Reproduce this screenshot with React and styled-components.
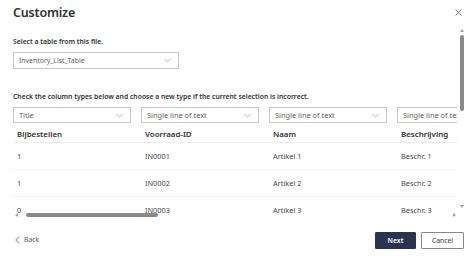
import styled, { createGlobalStyle } from "styled-components";

const GlobalStyle = createGlobalStyle`
  html, body {
    margin: 0;
    padding: 0;
    background: #ffffff;
  }
  * {
    box-sizing: border-box;
  }
  body {
    font-family: "Noto Sans", "Open Sans", sans-serif;
    color: #323130;
  }
`;

const columns = [
  { type: "Title", name: "Bijbestellen" },
  { type: "Single line of text", name: "Voorraad-ID" },
  { type: "Single line of text", name: "Naam" },
  { type: "Single line of text", name: "Beschrijving" },
];

const rows = [
  ["1", "IN0001", "Artikel 1", "Beschr. 1"],
  ["1", "IN0002", "Artikel 2", "Beschr. 2"],
  ["0", "IN0003", "Artikel 3", "Beschr. 3"],
];

const Chevron = () => (
  <svg width="7" height="5" viewBox="0 0 7 5">
    <path d="M0.5 1 L3.5 4 L6.5 1" fill="none" stroke="#a19f9d" strokeWidth="0.8" />
  </svg>
);

const App = () => {
  return (
    <>
      <GlobalStyle />
      <Dialog>
        <Header>
          <Title>Customize</Title>
          <Close aria-label="Close">
            <svg width="7" height="7" viewBox="0 0 7 7">
              <path d="M0.5 0.5 L6.5 6.5 M6.5 0.5 L0.5 6.5" stroke="#605e5c" strokeWidth="0.8" />
            </svg>
          </Close>
        </Header>

        <Body>
          <Label $top={9}>Select a table from this file.</Label>
          <Select $width={166}>
            <span>Inventory_List_Table</span>
            <Chevron />
          </Select>

          <Label $top={23}>
            Check the column types below and choose a new type if the current selection is incorrect.
          </Label>

          <TableScroll>
            <Grid>
              <TypeRow>
                {columns.map((c, i) => (
                  <TypeCell key={i}>
                    <Select $width={118} $wide>
                      <span>{c.type}</span>
                      <Chevron />
                    </Select>
                  </TypeCell>
                ))}
              </TypeRow>
              <HeadRow>
                {columns.map((c, i) => (
                  <Cell key={i} $bold>
                    {c.name}
                  </Cell>
                ))}
              </HeadRow>
              {rows.map((r, ri) => (
                <Row key={ri}>
                  {r.map((v, ci) => (
                    <Cell key={ci}>{v}</Cell>
                  ))}
                </Row>
              ))}
            </Grid>
          </TableScroll>

          <VTrack>
            <Arrow $dir="up" />
            <VThumb />
            <Arrow $dir="down" style={{ marginTop: "auto" }} />
          </VTrack>

          <HTrack>
            <Arrow $dir="left" />
            <HThumb />
            <Arrow $dir="right" style={{ marginLeft: "auto" }} />
          </HTrack>
        </Body>

        <Footer>
          <BackButton>
            <svg width="5" height="8" viewBox="0 0 5 8">
              <path d="M4 0.5 L0.8 4 L4 7.5" fill="none" stroke="#605e5c" strokeWidth="0.8" />
            </svg>
            Back
          </BackButton>
          <Actions>
            <PrimaryButton>Next</PrimaryButton>
            <SecondaryButton>Cancel</SecondaryButton>
          </Actions>
        </Footer>
      </Dialog>
    </>
  );
};

const Dialog = styled.div`
  width: 474px;
  height: 260px;
  background: #ffffff;
  display: flex;
  flex-direction: column;
  overflow: hidden;
`;

const Header = styled.div`
  height: 28px;
  display: flex;
  align-items: center;
  justify-content: space-between;
  padding: 0 12px 4px 13px;
`;

const Title = styled.h1`
  margin: 0;
  font-size: 12.5px;
  font-weight: 600;
  color: #323130;
  letter-spacing: -0.2px;
`;

const Close = styled.button`
  border: none;
  background: none;
  padding: 0;
  display: flex;
  cursor: pointer;
`;

const Body = styled.div`
  position: relative;
  height: 191px;
  padding: 0 18px 0 13px;
  display: flex;
  flex-direction: column;
`;

const Label = styled.div`
  margin-top: ${(p) => p.$top}px;
  font-size: 6.8px;
  line-height: 10px;
  font-weight: 600;
  color: #323130;
  white-space: nowrap;
`;

const Select = styled.div`
  margin-top: 5px;
  width: ${(p) => p.$width}px;
  height: 17px;
  border: 1px solid #c8c6c4;
  border-radius: 1px;
  display: flex;
  align-items: center;
  justify-content: space-between;
  padding: 0 7px 0 5px;
  font-size: ${(p) => (p.$wide ? "7.4px" : "6.9px")};
  color: #605e5c;
  white-space: nowrap;

  span {
    overflow: hidden;
  }
`;

const TableScroll = styled.div`
  margin-top: 5px;
  height: 106px;
  width: 444px;
  overflow: hidden;
`;

const Grid = styled.div`
  width: 512px;
`;

const TypeRow = styled.div`
  display: grid;
  grid-template-columns: repeat(4, 128px);
  height: 16px;
`;

const TypeCell = styled.div`
  ${Select} {
    margin-top: 0;
    height: 16px;
  }
`;

const HeadRow = styled.div`
  display: grid;
  grid-template-columns: repeat(4, 128px);
  height: 20px;
  align-items: center;
  padding-top: 3px;
  border-bottom: 1px solid #edebe9;
`;

const Row = styled.div`
  display: grid;
  grid-template-columns: repeat(4, 128px);
  height: 27px;
  align-items: center;
  border-bottom: 1px solid #f3f2f1;
`;

const Cell = styled.div`
  padding-left: 4px;
  font-size: ${(p) => (p.$bold ? "7.9px" : "7.4px")};
  font-weight: ${(p) => (p.$bold ? 600 : 400)};
  color: ${(p) => (p.$bold ? "#323130" : "#4a4a4a")};
  white-space: nowrap;
`;

const VTrack = styled.div`
  position: absolute;
  top: 1px;
  right: 10px;
  width: 5px;
  height: 179px;
  display: flex;
  flex-direction: column;
  align-items: center;
`;

const VThumb = styled.div`
  margin-top: 3px;
  width: 4px;
  height: 76px;
  border-radius: 2px;
  background: #8a8a8a;
`;

const HTrack = styled.div`
  position: absolute;
  left: 15px;
  top: 184px;
  width: 441px;
  height: 5px;
  display: flex;
  align-items: center;
`;

const HThumb = styled.div`
  margin-left: 8px;
  width: 132px;
  height: 4px;
  border-radius: 2px;
  background: #8a8a8a;
`;

const Arrow = styled.div`
  width: 0;
  height: 0;
  border: 2.5px solid transparent;
  ${(p) =>
    p.$dir === "up"
      ? "border-bottom: 3px solid #a0a0a0; border-top-width: 0;"
      : p.$dir === "down"
      ? "border-top: 3px solid #a0a0a0; border-bottom-width: 0;"
      : p.$dir === "left"
      ? "border-right: 3px solid #a0a0a0; border-left-width: 0;"
      : "border-left: 3px solid #a0a0a0; border-right-width: 0;"}
`;

const Footer = styled.div`
  flex: 1;
  display: flex;
  align-items: flex-start;
  justify-content: space-between;
  padding: 13px 10px 0 15px;
`;

const BackButton = styled.button`
  margin-top: 3px;
  border: none;
  background: none;
  padding: 0;
  display: flex;
  align-items: center;
  gap: 4px;
  font-family: inherit;
  font-size: 6.8px;
  color: #605e5c;
  cursor: pointer;
`;

const Actions = styled.div`
  display: flex;
  gap: 5px;
`;

const BaseButton = styled.button`
  height: 17px;
  border-radius: 1px;
  font-family: inherit;
  font-size: 6.8px;
  font-weight: 600;
  padding: 0;
  cursor: pointer;
`;

const PrimaryButton = styled(BaseButton)`
  width: 41px;
  border: 1px solid #2b3350;
  background: #2b3350;
  color: #ffffff;
`;

const SecondaryButton = styled(BaseButton)`
  width: 43px;
  border: 1px solid #8a8886;
  background: #ffffff;
  color: #323130;
  font-weight: 400;
`;

export default App;
